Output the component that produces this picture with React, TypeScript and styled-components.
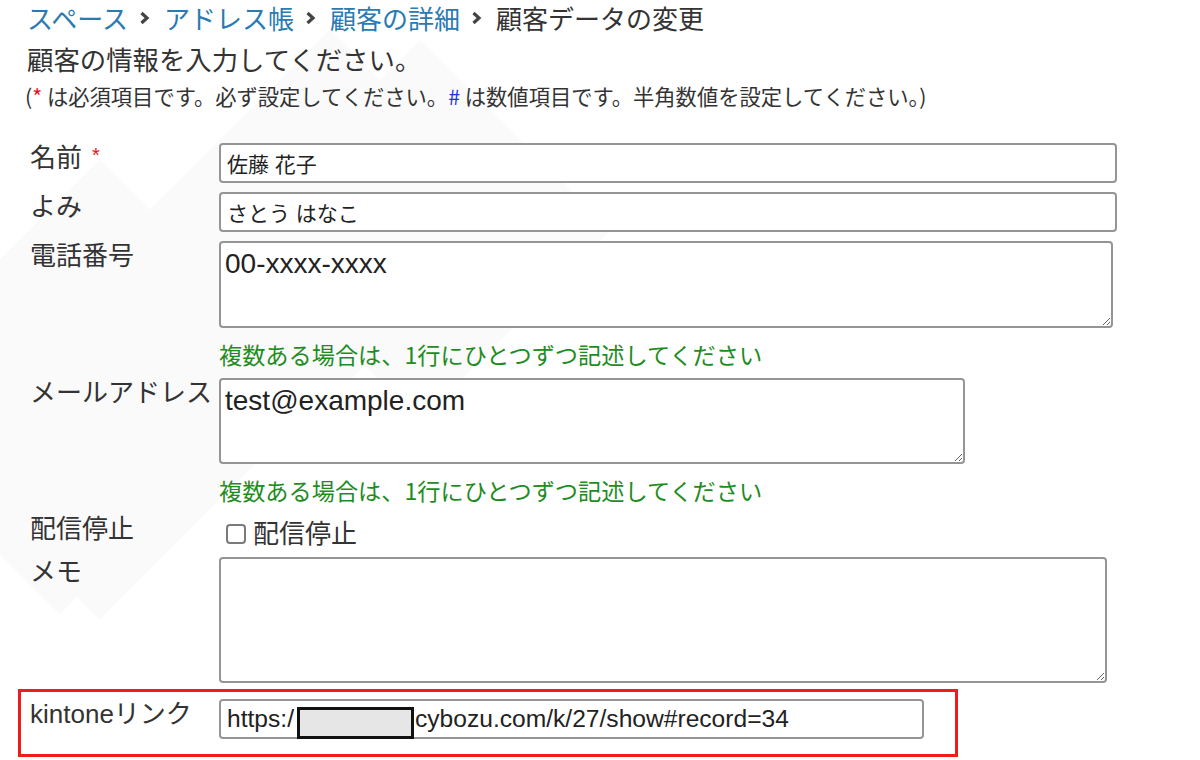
import React from "react";
import styled, { createGlobalStyle } from "styled-components";

const GlobalStyle = createGlobalStyle`
  html, body { margin: 0; padding: 0; background: #ffffff; }
  body {
    font-family: "Noto Sans CJK JP", "Noto Sans", sans-serif;
    color: #333333;
  }
  * { box-sizing: border-box; }
`;

const JP = `"Liberation Sans", "Noto Sans CJK JP", sans-serif`;

const Page = styled.div`
  position: relative;
  width: 1200px;
  height: 760px;
  overflow: hidden;
  padding: 1px 0 0 27px;
  background: #ffffff;
`;

const Watermark = styled.div`
  position: absolute;
  inset: 0;
  z-index: 0;
  pointer-events: none;
`;

const Diamond = styled.div<{ $cx: number; $cy: number; $hd: number }>`
  position: absolute;
  left: ${(p) => p.$cx - (p.$hd * Math.SQRT2) / 2}px;
  top: ${(p) => p.$cy - (p.$hd * Math.SQRT2) / 2}px;
  width: ${(p) => p.$hd * Math.SQRT2}px;
  height: ${(p) => p.$hd * Math.SQRT2}px;
  background: #fafafa;
  transform: rotate(45deg);
`;

const Content = styled.div`
  position: relative;
  z-index: 1;
`;

const Breadcrumb = styled.nav`
  display: flex;
  align-items: center;
  height: 34px;
  font-size: 26px;
  line-height: 34px;
`;

const Crumb = styled.a`
  color: #2a7ab3;
  text-decoration: none;
`;

const Current = styled.span`
  color: #333333;
`;

const SepWrap = styled.span`
  display: inline-flex;
  align-items: center;
  margin: 0 14px 0 11px;
  height: 34px;
`;

const Sep = () => (
  <SepWrap>
    <svg width="11" height="14" viewBox="0 0 11 14">
      <path d="M2.5 2 L8 7 L2.5 12" fill="none" stroke="#444" strokeWidth="3.2" />
    </svg>
  </SepWrap>
);

const Lead = styled.p`
  margin: 7px 0 0 0;
  font-size: 26.4px;
  line-height: 34px;
  color: #333333;
`;

const Note = styled.p`
  margin: 6px 0 0 -2px;
  font-size: 21.3px;
  line-height: 28px;
  color: #333333;
  white-space: nowrap;
`;

const Red = styled.span`
  color: #e8141b;
`;

const Blue = styled.span`
  color: #1f2fe8;
`;

const Form = styled.div`
  display: flex;
  flex-direction: column;
  gap: 9px;
  margin: 33px 0 0 3px;
`;

const Row = styled.div`
  display: grid;
  grid-template-columns: 189px auto;
  align-items: start;
`;

const LinkRow = styled(Row)`
  margin: -3px 0 0 -12px;
  width: 940px;
  height: 68px;
  border: 3px solid #ef1c1c;
  padding: 7px 0 0 9px;
`;

const Label = styled.div`
  font-size: 26px;
  line-height: 30px;
  color: #333333;
  white-space: nowrap;
  font-family: ${JP};
`;

const Req = styled.span`
  color: #e8141b;
  font-size: 20px;
  vertical-align: top;
  margin-left: 10px;
  line-height: 24px;
`;

const Field = styled.div`
  display: flex;
  flex-direction: column;
  align-items: flex-start;
`;

const TextInput = styled.input<{ $w: number }>`
  width: ${(p) => p.$w}px;
  height: 40px;
  border: 2px solid #959595;
  border-radius: 4px;
  padding: 0 6px;
  font-family: ${JP};
  font-size: 21px;
  color: #222222;
  background: #ffffff;
  outline: none;
`;

const TextArea = styled.textarea<{ $w: number; $h: number }>`
  width: ${(p) => p.$w}px;
  height: ${(p) => p.$h}px;
  border: 2px solid #959595;
  border-radius: 4px;
  padding: 4px 4px;
  font-family: ${JP};
  font-size: 28px;
  line-height: 34px;
  color: #222222;
  background: #ffffff;
  outline: none;
  resize: both;
  margin: 0;
  display: block;
`;

const Help = styled.div`
  margin: 13px 0 2px 0;
  font-size: 23.2px;
  line-height: 26px;
  color: #1e8c1e;
  white-space: nowrap;
`;

const CheckRow = styled.label`
  display: flex;
  align-items: center;
  height: 34px;
  padding-left: 7px;
  gap: 7px;
  font-size: 26px;
  color: #333333;
`;

const Box = styled.span`
  width: 20px;
  height: 20px;
  border: 2px solid #7a7a7a;
  border-radius: 4px;
  background: #ffffff;
  margin-top: 5px;
`;

const UrlField = styled.div`
  display: flex;
  align-items: center;
  width: 705px;
  height: 40px;
  border: 2px solid #959595;
  border-radius: 4px;
  padding-left: 6px;
  font-family: ${JP};
  font-size: 24.6px;
  color: #222222;
  background: #ffffff;
  white-space: nowrap;
`;

const Redacted = styled.span`
  display: inline-block;
  align-self: flex-end;
  width: 117px;
  height: 32px;
  margin: 0 1px -2px 3px;
  background: #e6e6e6;
  border: 3px solid #111111;
`;

export default function App() {
  return (
    <>
      <GlobalStyle />
      <Page>
        <Watermark>
          <Diamond $cx={100} $cy={390} $hd={230} />
          <Diamond $cx={330} $cy={215} $hd={185} />
          <Diamond $cx={420} $cy={230} $hd={190} />
          <Diamond $cx={60} $cy={470} $hd={145} />
        </Watermark>
        <Content>
          <Breadcrumb>
            <Crumb href="#">スペース</Crumb>
            <Sep />
            <Crumb href="#">アドレス帳</Crumb>
            <Sep />
            <Crumb href="#">顧客の詳細</Crumb>
            <Sep />
            <Current>顧客データの変更</Current>
          </Breadcrumb>
          <Lead>顧客の情報を入力してください。</Lead>
          <Note>
            (<Red>*</Red> は必須項目です。必ず設定してください。<Blue>#</Blue> は数値項目です。半角数値を設定してください。)
          </Note>
          <Form>
            <Row>
              <Label>
                名前<Req>*</Req>
              </Label>
              <Field>
                <TextInput $w={898} defaultValue="佐藤 花子" readOnly />
              </Field>
            </Row>
            <Row>
              <Label>よみ</Label>
              <Field>
                <TextInput $w={898} defaultValue="さとう はなこ" readOnly />
              </Field>
            </Row>
            <Row>
              <Label>電話番号</Label>
              <Field>
                <TextArea $w={894} $h={87} defaultValue="00-xxxx-xxxx" readOnly />
                <Help>複数ある場合は、1行にひとつずつ記述してください</Help>
              </Field>
            </Row>
            <Row>
              <Label>メールアドレス</Label>
              <Field>
                <TextArea $w={746} $h={86} defaultValue="test@example.com" readOnly />
                <Help>複数ある場合は、1行にひとつずつ記述してください</Help>
              </Field>
            </Row>
            <Row>
              <Label>配信停止</Label>
              <Field>
                <CheckRow>
                  <Box />
                  配信停止
                </CheckRow>
              </Field>
            </Row>
            <Row>
              <Label>メモ</Label>
              <Field>
                <TextArea $w={888} $h={126} defaultValue="" readOnly />
              </Field>
            </Row>
            <LinkRow>
              <Label>kintoneリンク</Label>
              <Field>
                <UrlField>
                  https:/
                  <Redacted />
                  cybozu.com/k/27/show#record=34
                </UrlField>
              </Field>
            </LinkRow>
          </Form>
        </Content>
      </Page>
    </>
  );
}
